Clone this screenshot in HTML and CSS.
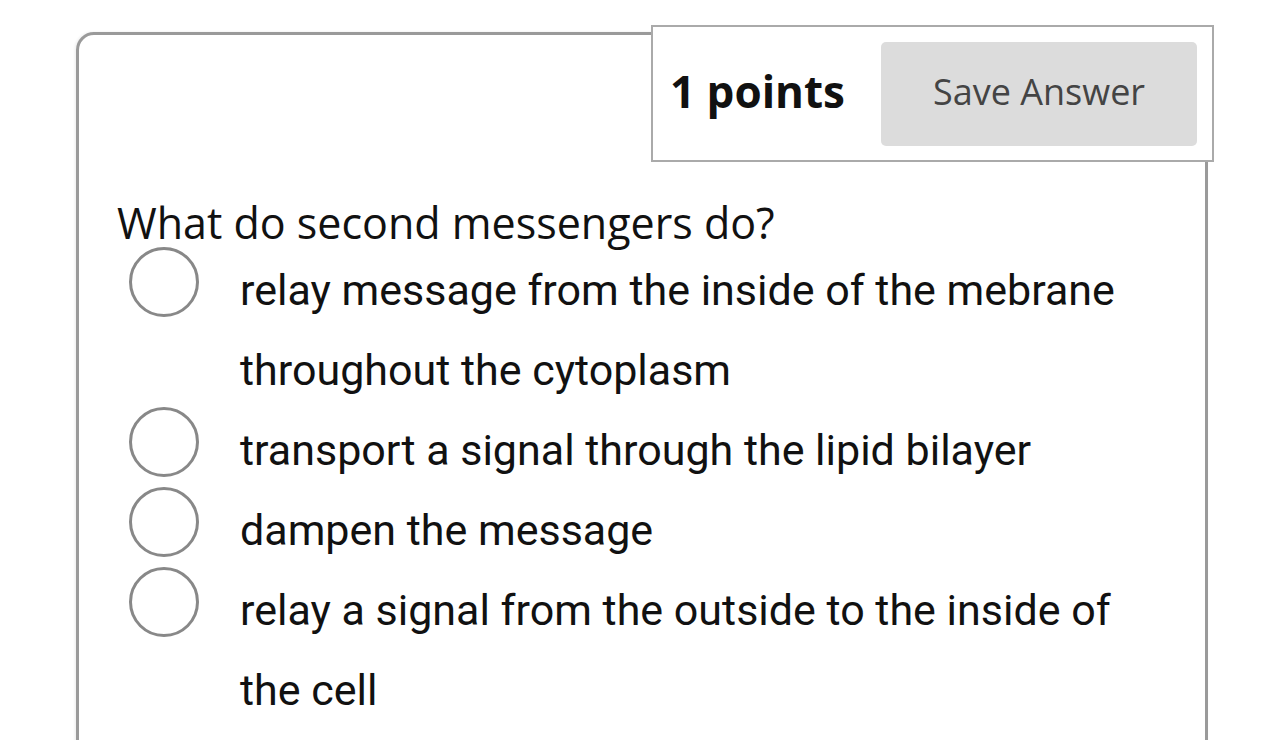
FILE: index.html
```html
<!DOCTYPE html>
<html lang="en">
<head>
  <meta charset="UTF-8" />
  <meta name="viewport" content="width=device-width, initial-scale=1" />
  <title>Question</title>
  <link rel="stylesheet" href="styles.css">
</head>
<body>

<div class="question-card">
  <div class="card-head">
    <div class="points-box">
      <span class="points">1 points</span>
      <button class="save-btn">Save Answer</button>
    </div>
  </div>

  <p class="question-text">What do second messengers do?</p>

  <ul class="answers">
    <li class="answer">
      <input type="radio" name="q1" id="a1" />
      <label for="a1">relay message from the inside of the mebrane throughout the cytoplasm</label>
    </li>
    <li class="answer">
      <input type="radio" name="q1" id="a2" />
      <label for="a2">transport a signal through the lipid bilayer</label>
    </li>
    <li class="answer">
      <input type="radio" name="q1" id="a3" />
      <label for="a3">dampen the message</label>
    </li>
    <li class="answer">
      <input type="radio" name="q1" id="a4" />
      <label for="a4">relay a signal from the outside to the inside of the cell</label>
    </li>
  </ul>
</div>

</body>
</html>
```

FILE: styles.css
```css
* { box-sizing: border-box; }

body {
  margin: 0;
  background: #fff;
  color: #111;
  font-family: "Open Sans", sans-serif;
  overflow: hidden;
}

.question-card {
  margin: 32px 0 0 76px;
  width: 1132px;
  min-height: 760px;
  border: 3px solid #9a9a9a;
  border-radius: 18px 0 0 0;
  box-shadow: -1px 0 3px rgba(0, 0, 0, 0.08);
  padding: 0 60px 0 38px;
}

.card-head {
  display: flex;
  justify-content: flex-end;
  margin-right: -69px;
}

.points-box {
  display: flex;
  align-items: center;
  gap: 36px;
  margin-top: -10px;
  padding: 15px 15px 14px 17px;
  background: #fff;
  border: 2px solid #aaa;
}

.points {
  padding-bottom: 7px;
  font-size: 44px;
  font-weight: 700;
  color: #111;
}

.save-btn {
  width: 316px;
  height: 104px;
  padding: 0 0 6px;
  border: none;
  border-radius: 5px;
  background: #dcdcdc;
  color: #444;
  font-family: "Open Sans", sans-serif;
  font-size: 36px;
  cursor: pointer;
}

.question-text {
  margin: 33px 0 -1px;
  font-size: 43px;
  line-height: 56px;
}

.answers {
  list-style: none;
  margin: 0;
  padding: 0 0 0 12px;
}

.answer {
  display: flex;
  align-items: flex-start;
  gap: 41px;
}

.answer input {
  appearance: none;
  -webkit-appearance: none;
  flex: none;
  width: 70px;
  height: 70px;
  margin: -3px 0 0;
  border: 3px solid #888;
  border-radius: 50%;
  background: #fff;
}

.answer label {
  font-family: Roboto, sans-serif;
  font-size: 43px;
  line-height: 80px;
  color: #111;
}
```
